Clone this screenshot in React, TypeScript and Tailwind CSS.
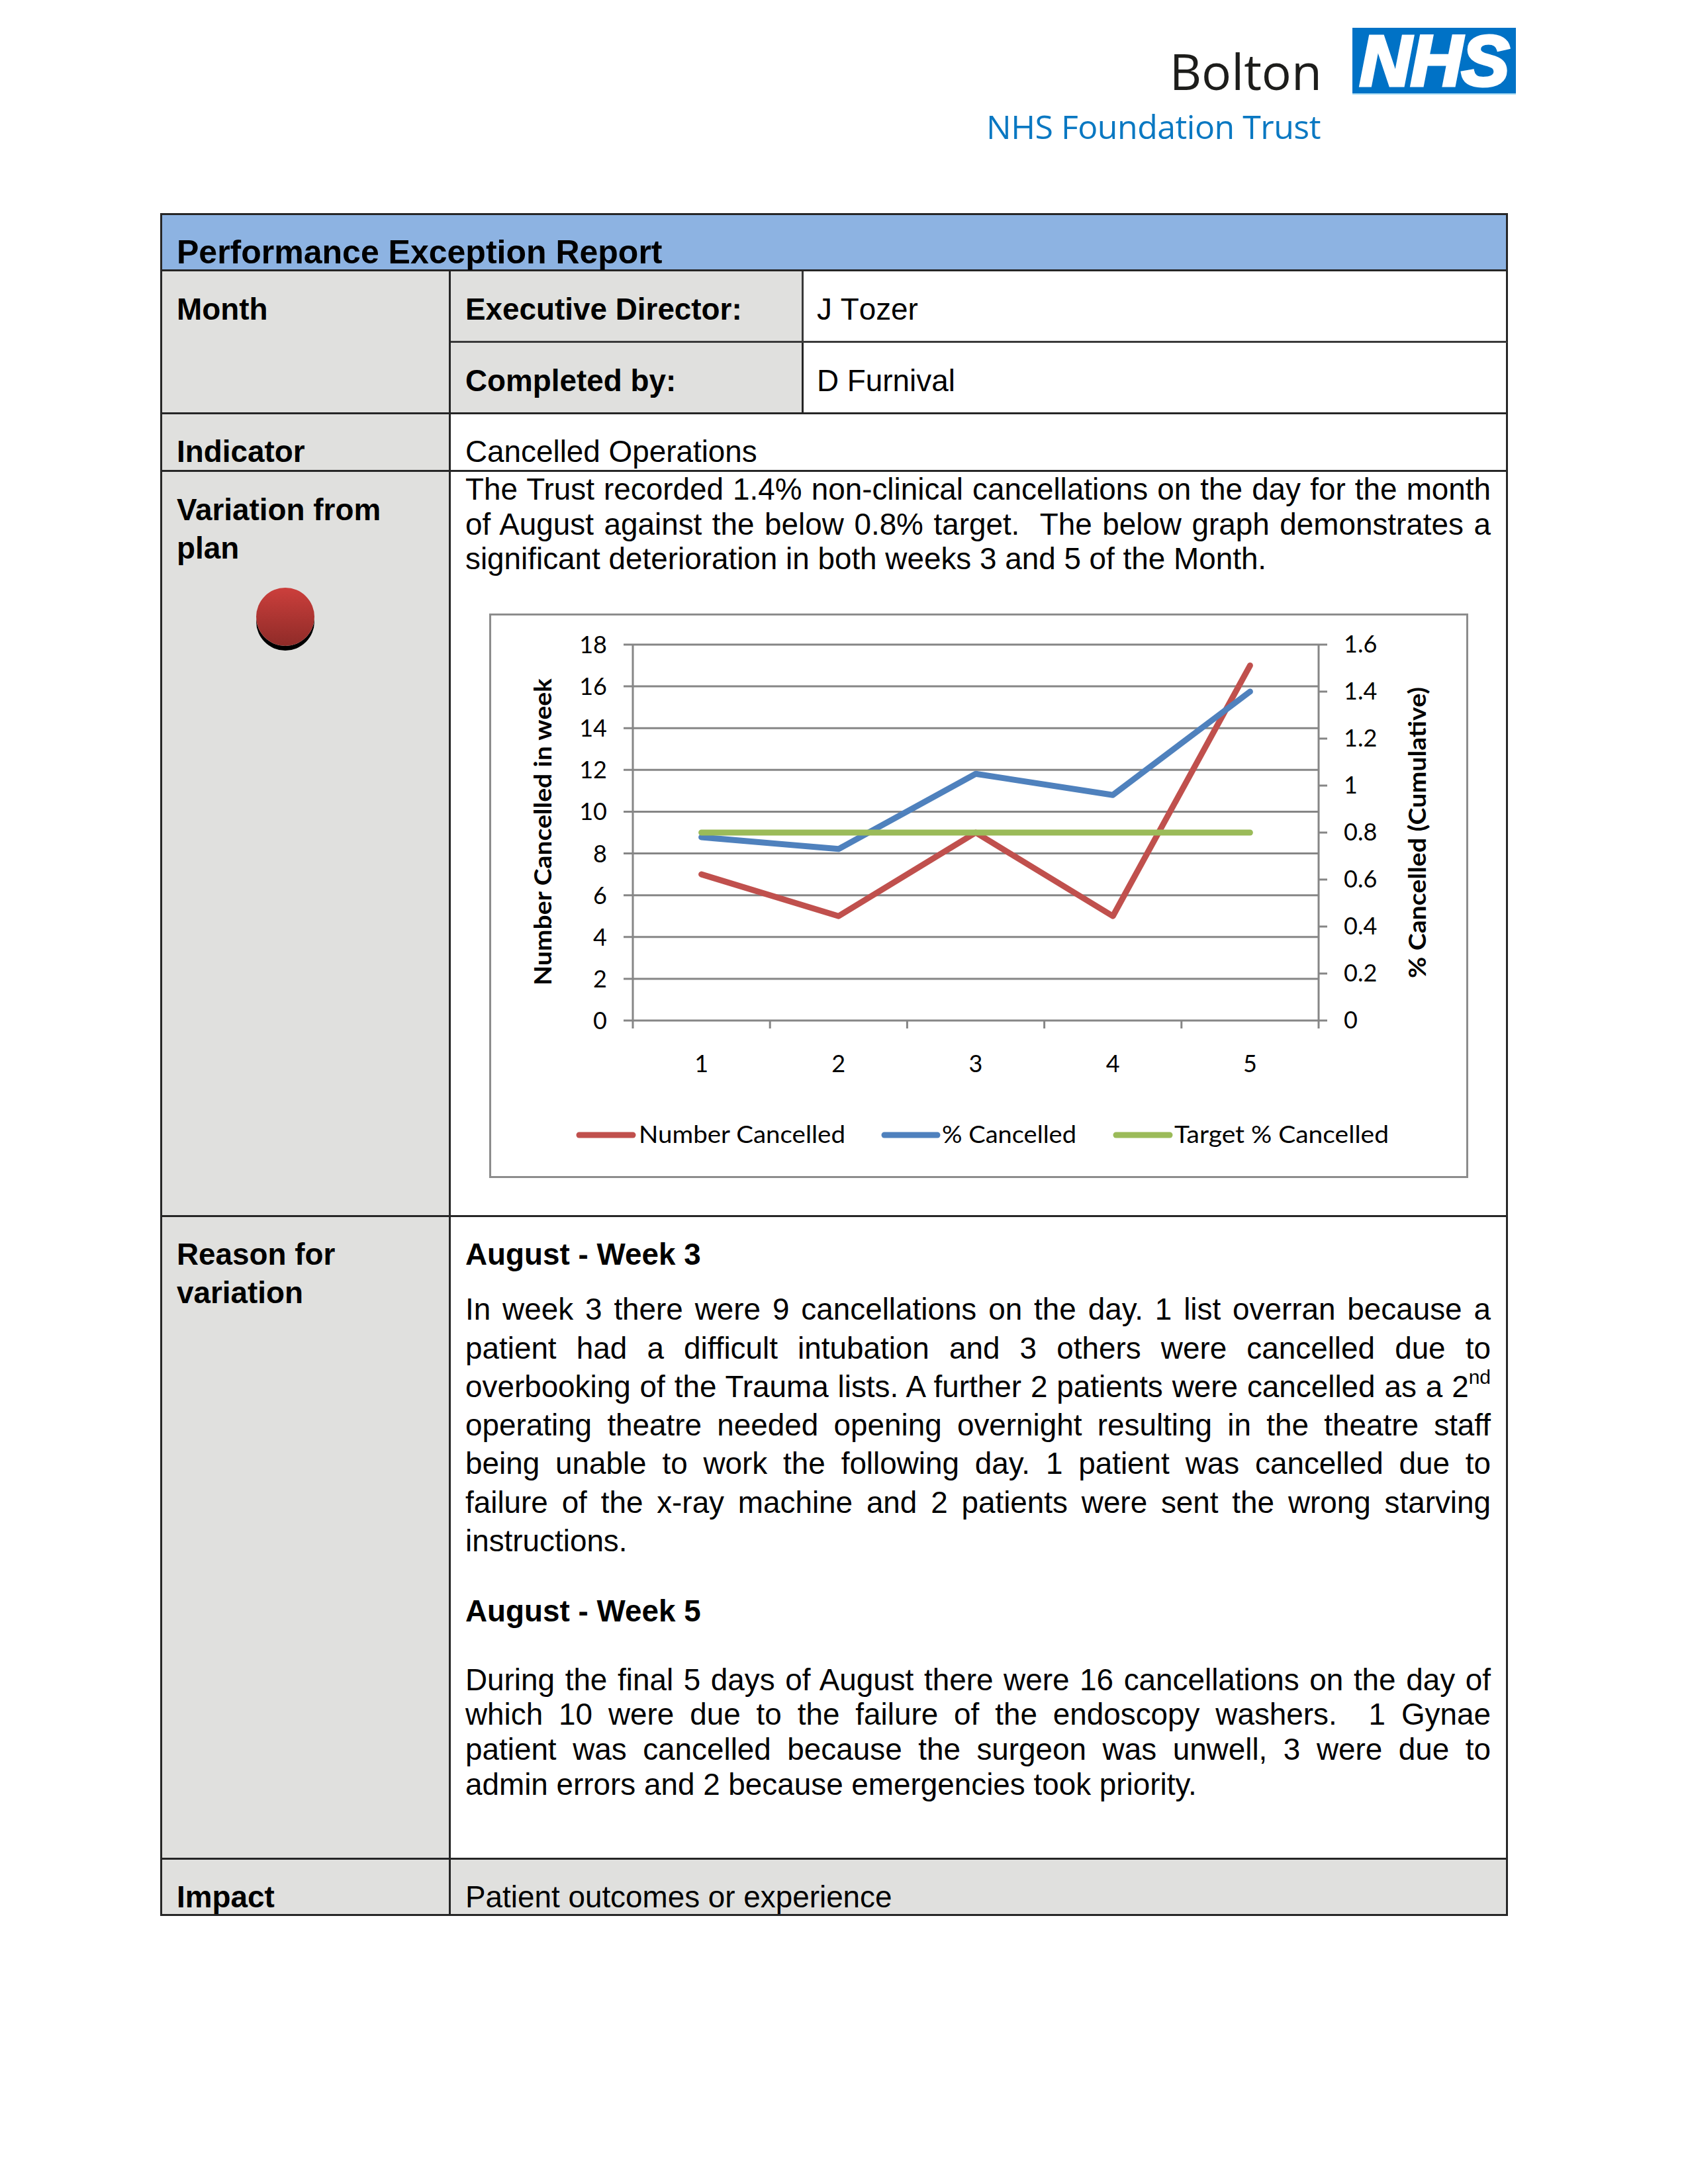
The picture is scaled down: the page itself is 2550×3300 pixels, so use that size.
import React from "react";

const sans = "[font-family:'Liberation_Sans',Arial,sans-serif]";
const grey = "bg-[#e0e0de]";
const cellB = "border-b-[3px] border-[#262626]";
const cellR = "border-r-[3px] border-[#3a3a3a]";

const step = 207.2;
const xs = [0, 1, 2, 3, 4].map((i) => 1058.6 + i * step);
const leftY = (v: number) => 1542 - v * 31.556;
const rightY = (v: number) => 1542 - v * 355;
const pts = (vals: number[], f: (v: number) => number) =>
  vals.map((v, i) => `${xs[i]},${f(v)}`).join(" ");

function Chart() {
  const gridColor = "#868686";
  return (
    <div className="w-[1479px] h-[853px] border-[3px] border-[#8c8c8c] bg-white">
      <svg viewBox="741 930 1473 847" className="block w-[1473px] h-[847px]">
        {[0, 2, 4, 6, 8, 10, 12, 14, 16, 18].map((v) => (
          <g key={v}>
            <line x1={941} x2={1991} y1={leftY(v)} y2={leftY(v)} stroke={gridColor} strokeWidth={3} />
            <text x={916} y={leftY(v) + 13} textAnchor="end" className="font-['Lato'] text-[36px] fill-black">
              {v}
            </text>
          </g>
        ))}
        <line x1={955} x2={955} y1={974} y2={1554} stroke={gridColor} strokeWidth={3} />
        <line x1={1991} x2={1991} y1={974} y2={1554} stroke={gridColor} strokeWidth={3} />
        {[1162.2, 1369.4, 1576.6, 1783.8].map((x) => (
          <line key={x} x1={x} x2={x} y1={1542} y2={1554} stroke={gridColor} strokeWidth={3} />
        ))}
        {["0", "0.2", "0.4", "0.6", "0.8", "1", "1.2", "1.4", "1.6"].map((s) => (
          <g key={s}>
            <line x1={1991} x2={2004} y1={rightY(+s)} y2={rightY(+s)} stroke={gridColor} strokeWidth={3} />
            <text x={2029} y={rightY(+s) + 12} className="font-['Lato'] text-[36px] fill-black">
              {s}
            </text>
          </g>
        ))}
        {xs.map((x, i) => (
          <text key={i} x={x} y={1620} textAnchor="middle" className="font-['Lato'] text-[36px] fill-black">
            {i + 1}
          </text>
        ))}
        <polyline points={pts([7, 5, 9, 5, 17], leftY)} fill="none" stroke="#c0504d" strokeWidth={9} strokeLinecap="round" strokeLinejoin="round" />
        <polyline points={pts([0.78, 0.73, 1.05, 0.96, 1.4], rightY)} fill="none" stroke="#4f81bd" strokeWidth={9} strokeLinecap="round" strokeLinejoin="round" />
        <polyline points={pts([0.8, 0.8, 0.8, 0.8, 0.8], rightY)} fill="none" stroke="#9bbb59" strokeWidth={9} strokeLinecap="round" strokeLinejoin="round" />
        <text transform="translate(832,1257) rotate(-90)" textAnchor="middle" textLength={464} lengthAdjust="spacingAndGlyphs" className="font-['Lato'] font-bold text-[36px] fill-black">
          Number Cancelled in week
        </text>
        <text transform="translate(2153,1258) rotate(-90)" textAnchor="middle" textLength={440} lengthAdjust="spacingAndGlyphs" className="font-['Lato'] font-bold text-[36px] fill-black">
          % Cancelled (Cumulative)
        </text>
        <line x1={874} x2={955} y1={1715} y2={1715} stroke="#c0504d" strokeWidth={9} strokeLinecap="round" />
        <text x={964} y={1727} textLength={312} lengthAdjust="spacingAndGlyphs" className="font-['Lato'] text-[36px] fill-black">
          Number Cancelled
        </text>
        <line x1={1335} x2={1415} y1={1715} y2={1715} stroke="#4f81bd" strokeWidth={9} strokeLinecap="round" />
        <text x={1422} y={1727} textLength={203} lengthAdjust="spacingAndGlyphs" className="font-['Lato'] text-[36px] fill-black">
          % Cancelled
        </text>
        <line x1={1685} x2={1766} y1={1715} y2={1715} stroke="#9bbb59" strokeWidth={9} strokeLinecap="round" />
        <text x={1773} y={1727} textLength={324} lengthAdjust="spacingAndGlyphs" className="font-['Lato'] text-[36px] fill-black">
          Target % Cancelled
        </text>
      </svg>
    </div>
  );
}

function Logo() {
  return (
    <div className="h-[322px] pt-[42px] pr-[260px] flex justify-end items-start gap-[49px]">
      <div className="flex flex-col items-end [font-family:'Open_Sans',sans-serif]">
        <div className="text-[75px] leading-[80px] mt-[25px] text-[#1d1d1b] -mr-[3px]">Bolton</div>
        <div className="text-[50px] leading-[60px] mt-[14px] font-medium text-[#0a78c2] -mr-[1px] tracking-[-0.5px]">NHS Foundation Trust</div>
      </div>
      <div className="w-[247px] h-[101px] bg-[#0072c6] border-b-2 border-[#a8dbf2] flex items-center justify-center">
        <span className={`${sans} font-bold italic text-[108px] leading-[99px] text-white [-webkit-text-stroke:5px_white] tracking-[-1px]`}>NHS</span>
      </div>
    </div>
  );
}

export default function App() {
  return (
    <div className={`w-[2550px] h-[3300px] bg-white text-black ${sans} text-[45.83px] leading-[52.7px]`}>
      <Logo />
      <div className="ml-[242px] w-[2036px] border-l-[3px] border-t-[3px] border-[#262626] grid grid-cols-[436px_533px_1064px] grid-rows-[85px_108px_108px_87px_1126px_971px_85px]">
        <div className={`col-span-3 bg-[#8db3e2] ${cellB} border-r-[3px] border-r-[#262626] pl-[22px] flex items-end font-bold text-[50px]`}>
          <span className="relative top-[1px]">Performance Exception Report</span>
        </div>

        <div className={`row-span-2 ${grey} ${cellB} ${cellR} pl-[22px] pt-[32px] font-bold`}>Month</div>
        <div className={`${grey} border-b-[3px] border-[#3a3a3a] ${cellR} pl-[22px] pt-[32px] font-bold`}>Executive Director:</div>
        <div className={`border-b-[3px] border-[#3a3a3a] border-r-[3px] border-r-[#262626] pl-[20px] pt-[32px] [font-kerning:none]`}>J Tozer</div>
        <div className={`${grey} ${cellB} ${cellR} pl-[22px] pt-[32px] font-bold`}>Completed by:</div>
        <div className={`${cellB} border-r-[3px] border-r-[#262626] pl-[20px] pt-[32px]`}>D Furnival</div>

        <div className={`${grey} ${cellB} ${cellR} pl-[22px] pt-[31px] font-bold`}>Indicator</div>
        <div className={`col-span-2 ${cellB} border-r-[3px] border-r-[#262626] pl-[22px] pt-[31px]`}>Cancelled Operations</div>

        <div className={`${grey} ${cellB} ${cellR} pl-[22px] pt-[29px] font-bold leading-[58.3px]`}>
          <div>Variation from</div>
          <div>plan</div>
          <div className="ml-[120px] mt-[29px] w-[88px] h-[88px] rounded-full bg-gradient-to-b from-[#cc3f3c] to-[#8f2b28] shadow-[0_7px_0_#000]" />
        </div>
        <div className={`col-span-2 ${cellB} border-r-[3px] border-r-[#262626] pl-[22px] pr-[23px] pt-[1px]`}>
          <p className="text-justify">
            The Trust recorded 1.4% non-clinical cancellations on the day for the month of August against the below 0.8% target.{"\u00a0"} The below graph demonstrates a significant deterioration in both weeks 3 and 5 of the Month.
          </p>
          <div className="mt-[55px] ml-[36px]">
            <Chart />
          </div>
        </div>

        <div className={`${grey} ${cellB} ${cellR} pl-[22px] pt-[28px] font-bold leading-[58.3px]`}>
          <div>Reason for</div>
          <div>variation</div>
        </div>
        <div className={`col-span-2 ${cellB} border-r-[3px] border-r-[#262626] pl-[22px] pr-[23px] pt-[28px]`}>
          <div className="font-bold leading-[58.3px]">August - Week 3</div>
          <p className="mt-[25px] leading-[58.3px] text-justify">
            In week 3 there were 9 cancellations on the day. 1 list overran because a patient had a difficult intubation and 3 others were cancelled due to overbooking of the Trauma lists. A further 2 patients were cancelled as a 2<sup className="text-[30px] leading-[0] -top-[20px]">nd</sup> operating theatre needed opening overnight resulting in the theatre staff being unable to work the following day. 1 patient was cancelled due to failure of the x-ray machine and 2 patients were sent the wrong starving instructions.
          </p>
          <div className="mt-[48px] font-bold leading-[58.3px]">August - Week 5</div>
          <p className="mt-[48px] text-justify">
            During the final 5 days of August there were 16 cancellations on the day of which 10 were due to the failure of the endoscopy washers.{"\u00a0"} 1 Gynae patient was cancelled because the surgeon was unwell, 3 were due to admin errors and 2 because emergencies took priority.
          </p>
        </div>

        <div className={`${grey} ${cellB} ${cellR} pl-[22px] pt-[31px] font-bold`}>Impact</div>
        <div className={`col-span-2 ${grey} ${cellB} border-r-[3px] border-r-[#262626] pl-[22px] pt-[31px]`}>Patient outcomes or experience</div>
      </div>
    </div>
  );
}
